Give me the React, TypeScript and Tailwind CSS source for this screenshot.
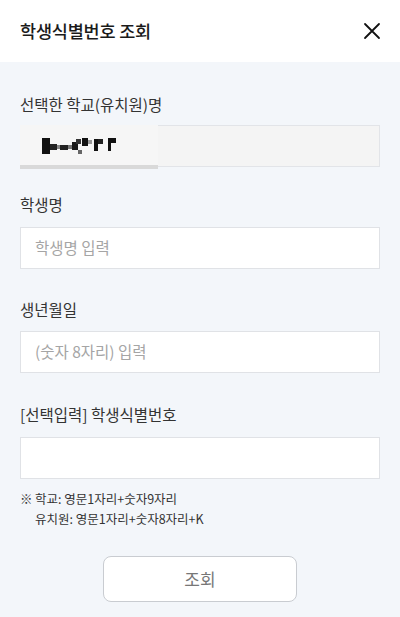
import React from "react";

const font = { fontFamily: '"Noto Sans CJK KR", "Noto Sans", sans-serif' };

function Blur() {
  return (
    <svg width="80" height="18" viewBox="0 0 80 18" className="block">
      <rect x="0" y="1" width="8" height="16" fill="#111" />
      <rect x="8" y="7" width="7" height="6" fill="#222" />
      <rect x="15" y="8" width="3" height="4" fill="#888" />
      <rect x="18" y="8" width="8" height="5" fill="#222" />
      <rect x="26" y="8" width="4" height="4" fill="#777" />
      <rect x="30" y="5" width="6" height="8" fill="#1a1a1a" />
      <rect x="34" y="2" width="5" height="5" fill="#333" />
      <rect x="36" y="13" width="4" height="4" fill="#666" />
      <rect x="40" y="1" width="6" height="8" fill="#111" />
      <rect x="46" y="3" width="4" height="4" fill="#999" />
      <rect x="52" y="2" width="4" height="12" fill="#111" />
      <rect x="56" y="2" width="5" height="5" fill="#222" />
      <rect x="66" y="1" width="3" height="13" fill="#111" />
      <rect x="69" y="1" width="5" height="5" fill="#111" />
    </svg>
  );
}

export default function App() {
  return (
    <div className="w-[400px] h-[617px] bg-[#f3f6fa] flex flex-col text-[#222]" style={font}>
      <div className="h-[62px] bg-white flex items-center justify-between pl-5 pr-[18px] shrink-0">
        <h1 className="text-[17.5px] font-medium tracking-[-0.2px] text-[#1a1a1a]">학생식별번호 조회</h1>
        <svg width="20" height="20" viewBox="0 0 20 20" fill="none" stroke="#111" strokeWidth="1.8" strokeLinecap="round">
          <path d="M3 3L17 17M17 3L3 17" />
        </svg>
      </div>

      <div className="flex flex-col px-5 pt-[31px]">
        <label className="text-[15.5px] leading-[22px] text-[#333]">선택한 학교(유치원)명</label>
        <div className="mt-[10px] h-[42px] border border-[#e2e4e8] bg-[#f4f4f4] flex">
          <div className="w-[138px] -my-px -ml-px flex flex-col bg-[#f6f6f6]">
            <div className="flex-1 flex items-center pl-[22px] pt-[2px]">
              <Blur />
            </div>
            <div className="h-[4px] bg-[#d9d9d9] -mb-[2px]" />
          </div>
        </div>

        <label className="text-[15.5px] leading-[22px] text-[#333] mt-[26px]">학생명</label>
        <div className="mt-[12px] h-[42px] border border-[#e0e2e6] bg-white flex items-center px-[14px]">
          <span className="text-[15.5px] text-[#a5a5a5]">학생명 입력</span>
        </div>

        <label className="text-[15.5px] leading-[22px] text-[#333] mt-[29px]">생년월일</label>
        <div className="mt-[11px] h-[42px] border border-[#e0e2e6] bg-white flex items-center px-[14px]">
          <span className="text-[15.5px] text-[#a5a5a5]">(숫자 8자리) 입력</span>
        </div>

        <label className="text-[15.5px] leading-[22px] text-[#333] mt-[30px]">[선택입력] 학생식별번호</label>
        <div className="mt-[12px] h-[42px] border border-[#e0e2e6] bg-white" />

        <div className="mt-[10px] text-[12.5px] leading-[20px] text-[#333] flex">
          <span className="w-[15px] shrink-0">※</span>
          <div className="flex flex-col">
            <span>학교: 영문1자리+숫자9자리</span>
            <span>유치원: 영문1자리+숫자8자리+K</span>
          </div>
        </div>

        <div className="flex justify-center mt-[27px]">
          <button className="w-[194px] h-[46px] rounded-[8px] border border-[#c9ccd1] bg-white text-[17px] text-[#777]">
            조회
          </button>
        </div>
      </div>
    </div>
  );
}
